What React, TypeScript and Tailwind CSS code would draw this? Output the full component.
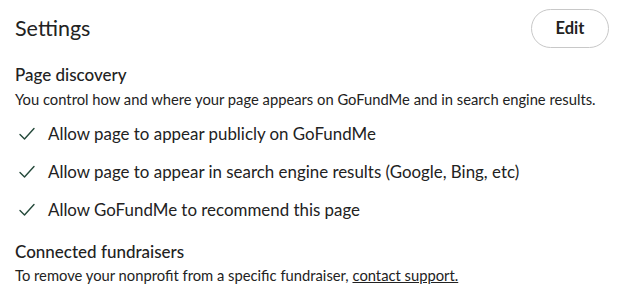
import React from 'react';

const items = [
  'Allow page to appear publicly on GoFundMe',
  'Allow page to appear in search engine results (Google, Bing, etc)',
  'Allow GoFundMe to recommend this page',
];

const Check = () => (
  <svg width="16" height="14" viewBox="0 0 16 14" fill="none" className="shrink-0">
    <path d="M1 7.5 L5.5 12 L15 1.5" stroke="#24493a" strokeWidth="1.4" strokeLinecap="round" strokeLinejoin="round" />
  </svg>
);

export default function App() {
  return (
    <div className="w-[622px] h-[302px] bg-white text-[#222] font-['Lato',sans-serif] px-[15px]">
      <div className="flex items-center justify-between pt-[9px]">
        <h1 className="text-[21.5px] leading-[39px]">Settings</h1>
        <button className="h-[39px] w-[78px] mr-[-2px] rounded-full border border-[#c8c8c8] text-[16.5px] font-bold text-[#222]">
          Edit
        </button>
      </div>
      <div className="mt-[17px]">
        <h2 className="text-[17px] font-medium leading-[20px]">Page discovery</h2>
        <p className="text-[14.75px] leading-[20px] mt-[4px]">
          You control how and where your page appears on GoFundMe and in search engine results.
        </p>
      </div>
      <ul className="mt-[14px] flex flex-col gap-[16px]">
        {items.map((item) => (
          <li key={item} className="flex items-center gap-[13px] pl-[4px] text-[16.9px] leading-[22px]">
            <Check />
            <span>{item}</span>
          </li>
        ))}
      </ul>
      <div className="mt-[21px]">
        <h2 className="text-[17px] font-medium leading-[20px]">Connected fundraisers</h2>
        <p className="text-[14.75px] leading-[20px] mt-[3px]">
          To remove your nonprofit from a specific fundraiser,{' '}
          <a href="#" className="underline">contact support.</a>
        </p>
      </div>
    </div>
  );
}
